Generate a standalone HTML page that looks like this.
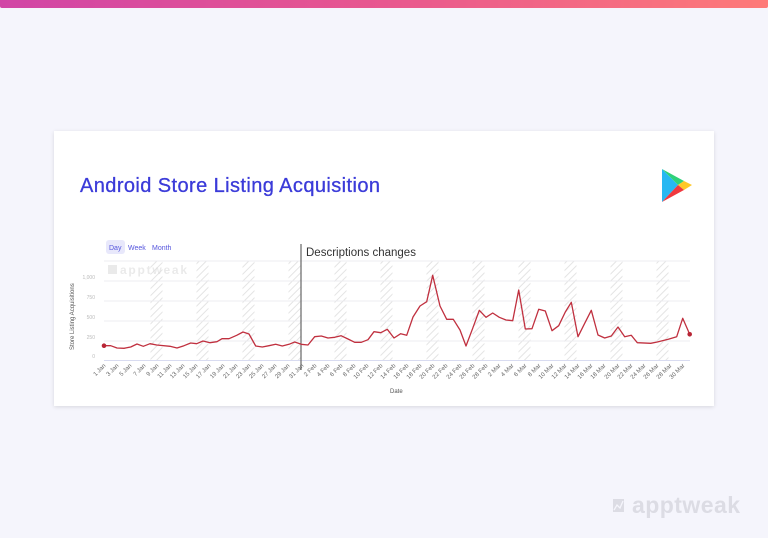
<!DOCTYPE html>
<html><head><style>
body{margin:0;width:768px;height:538px;background:#f5f5fc;position:relative;overflow:hidden;font-family:"Liberation Sans",sans-serif}
.bar{position:absolute;left:0;top:0;width:768px;height:8px;background:linear-gradient(90deg,#d145a6,#e8578f 50%,#fe7a78);border-radius:0 0 2px 2px}
.card{position:absolute;left:54px;top:131px;width:660px;height:275px;background:#fff;box-shadow:0 1px 4px rgba(0,0,0,.12)}
</style></head><body>
<div class="bar"></div>
<div class="card"></div>
<svg width="768" height="538" style="position:absolute;left:0;top:0" xmlns="http://www.w3.org/2000/svg">
<defs><pattern id="h" width="5" height="5" patternUnits="userSpaceOnUse" patternTransform="rotate(45)"><rect width="5" height="5" fill="#fff"/><line x1="0" y1="0" x2="0" y2="5" stroke="#e4e4e4" stroke-width="2"/></pattern></defs>
<text x="80" y="192" font-size="20" fill="#3b3bd9" stroke="#3b3bd9" stroke-width="0.3" font-family="Liberation Sans" textLength="300">Android Store Listing Acquisition</text>
<polygon points="662,169 678,185 662,202" fill="#27b8f2"/>
<polygon points="662,169 684,181 678,185" fill="#2fd17a"/>
<polygon points="684,181 692,185 684,190 678,185" fill="#ffc827"/>
<polygon points="662,202 678,185 684,190" fill="#f0393f"/>
<rect x="106" y="240" width="19" height="14" rx="3" fill="#e8e8fb"/>
<text x="109" y="250" font-size="7" fill="#5555dd">Day</text>
<text x="128" y="250" font-size="7" fill="#5555dd">Week</text>
<text x="152" y="250" font-size="7" fill="#5555dd">Month</text>
<g fill="url(#h)">
<rect x="150.5" y="261" width="12" height="99"/><rect x="196.5" y="261" width="12" height="99"/><rect x="242.5" y="261" width="12" height="99"/><rect x="288.5" y="261" width="12" height="99"/><rect x="334.5" y="261" width="12" height="99"/><rect x="380.5" y="261" width="12" height="99"/><rect x="426.5" y="261" width="12" height="99"/><rect x="472.5" y="261" width="12" height="99"/><rect x="518.5" y="261" width="12" height="99"/><rect x="564.5" y="261" width="12" height="99"/><rect x="610.5" y="261" width="12" height="99"/><rect x="656.5" y="261" width="12" height="99"/>
</g>
<g stroke="#ececf0" stroke-width="1">
<line x1="104" y1="261" x2="690" y2="261"/><line x1="104" y1="281" x2="690" y2="281"/><line x1="104" y1="301" x2="690" y2="301"/><line x1="104" y1="321" x2="690" y2="321"/><line x1="104" y1="341" x2="690" y2="341"/>
</g>
<line x1="104" y1="360.5" x2="690" y2="360.5" stroke="#d8dbf0"/>
<g font-size="5" fill="#bbb" text-anchor="end">
<text x="95" y="279">1,000</text><text x="95" y="299">750</text><text x="95" y="319">500</text><text x="95" y="339">250</text><text x="95" y="358">0</text>
</g>
<text transform="translate(74,350) rotate(-90)" font-size="6" fill="#555">Store Listing Acquisitions</text>
<g opacity=".6"><rect x="108" y="265" width="9" height="9" fill="#ddd"/><text x="120" y="274" font-size="12" font-weight="bold" fill="#ddd" textLength="67">apptweak</text></g>
<line x1="301" y1="244" x2="301" y2="370" stroke="#666" stroke-width="1.2"/>
<text x="306" y="256" font-size="11.5" fill="#333">Descriptions changes</text>
<polyline fill="none" stroke="#c0303f" stroke-width="1.3" stroke-linejoin="round" points="104,345.7 110.7,345.7 117,348 124,348.3 130.7,347 137,344 143.3,346.3 150,343.7 156.7,345 170,346.3 177,348 184,345.7 190.7,343 196.7,343.7 203,341 210,342.7 217,341.7 222,338.7 229,338.7 236.7,335.3 243,332 249,334 255.7,346 262.3,347 269,345.7 275.7,344.3 282.3,346 289,344.3 294.7,342 301.3,344.3 308,345 314.7,336.7 321.3,336 328,338 334.7,337.3 341,335.7 348,339 354.7,342.3 361.3,342.3 368,339.7 374,331.7 380.7,332.7 387.3,329.3 394,338 400.7,333.7 406.7,335.3 413,317 420,306 426.7,301.7 432.7,275.3 440,306 446.7,319.3 453.3,319.3 460,330 466,346 472.7,328.3 479.3,310.3 486,317.3 492.7,313 499.3,317.3 506,320 512.7,320.7 518.7,290 525.3,329 532,328.7 538.7,309.3 545.3,311 552,330.7 558.7,325.7 565.3,312 571.3,302.3 578,336.7 584.7,323.3 591.3,310.3 598,335 604.7,338 611.3,336 618,327 624.7,336.7 631.3,335.3 637.3,342.7 650.7,343.3 657.3,342 668.3,339.3 676.7,336.7 682.7,318.3 689.7,334.3"/>
<circle cx="104" cy="345.7" r="2.3" fill="#b82535"/><circle cx="689.7" cy="334.3" r="2.3" fill="#b82535"/>
<g font-size="6" fill="#666" text-anchor="end">
<text transform="translate(106,366) rotate(-45)">1 Jan</text><text transform="translate(119,366) rotate(-45)">3 Jan</text><text transform="translate(132,366) rotate(-45)">5 Jan</text><text transform="translate(146,366) rotate(-45)">7 Jan</text><text transform="translate(159,366) rotate(-45)">9 Jan</text><text transform="translate(172,366) rotate(-45)">11 Jan</text><text transform="translate(185,366) rotate(-45)">13 Jan</text><text transform="translate(198,366) rotate(-45)">15 Jan</text><text transform="translate(211,366) rotate(-45)">17 Jan</text><text transform="translate(225,366) rotate(-45)">19 Jan</text><text transform="translate(238,366) rotate(-45)">21 Jan</text><text transform="translate(251,366) rotate(-45)">23 Jan</text><text transform="translate(264,366) rotate(-45)">25 Jan</text><text transform="translate(277,366) rotate(-45)">27 Jan</text><text transform="translate(290,366) rotate(-45)">29 Jan</text><text transform="translate(304,366) rotate(-45)">31 Jan</text><text transform="translate(317,366) rotate(-45)">2 Feb</text><text transform="translate(330,366) rotate(-45)">4 Feb</text><text transform="translate(343,366) rotate(-45)">6 Feb</text><text transform="translate(356,366) rotate(-45)">8 Feb</text><text transform="translate(369,366) rotate(-45)">10 Feb</text><text transform="translate(383,366) rotate(-45)">12 Feb</text><text transform="translate(396,366) rotate(-45)">14 Feb</text><text transform="translate(409,366) rotate(-45)">16 Feb</text><text transform="translate(422,366) rotate(-45)">18 Feb</text><text transform="translate(435,366) rotate(-45)">20 Feb</text><text transform="translate(448,366) rotate(-45)">22 Feb</text><text transform="translate(462,366) rotate(-45)">24 Feb</text><text transform="translate(475,366) rotate(-45)">26 Feb</text><text transform="translate(488,366) rotate(-45)">28 Feb</text><text transform="translate(501,366) rotate(-45)">2 Mar</text><text transform="translate(514,366) rotate(-45)">4 Mar</text><text transform="translate(527,366) rotate(-45)">6 Mar</text><text transform="translate(541,366) rotate(-45)">8 Mar</text><text transform="translate(554,366) rotate(-45)">10 Mar</text><text transform="translate(567,366) rotate(-45)">12 Mar</text><text transform="translate(580,366) rotate(-45)">14 Mar</text><text transform="translate(593,366) rotate(-45)">16 Mar</text><text transform="translate(606,366) rotate(-45)">18 Mar</text><text transform="translate(620,366) rotate(-45)">20 Mar</text><text transform="translate(633,366) rotate(-45)">22 Mar</text><text transform="translate(646,366) rotate(-45)">24 Mar</text><text transform="translate(659,366) rotate(-45)">26 Mar</text><text transform="translate(672,366) rotate(-45)">28 Mar</text><text transform="translate(685,366) rotate(-45)">30 Mar</text>
</g>
<text x="390" y="393" font-size="6" fill="#555">Date</text>
<rect x="613" y="499" width="11" height="13" fill="#dcdce4"/>
<polyline points="614,510 617,505 620,508 623,501" fill="none" stroke="#f5f5fc" stroke-width="1.3"/>
<text x="632" y="513" font-size="23" font-weight="bold" fill="#dcdce4" textLength="108">apptweak</text>
</svg>
</body></html>
